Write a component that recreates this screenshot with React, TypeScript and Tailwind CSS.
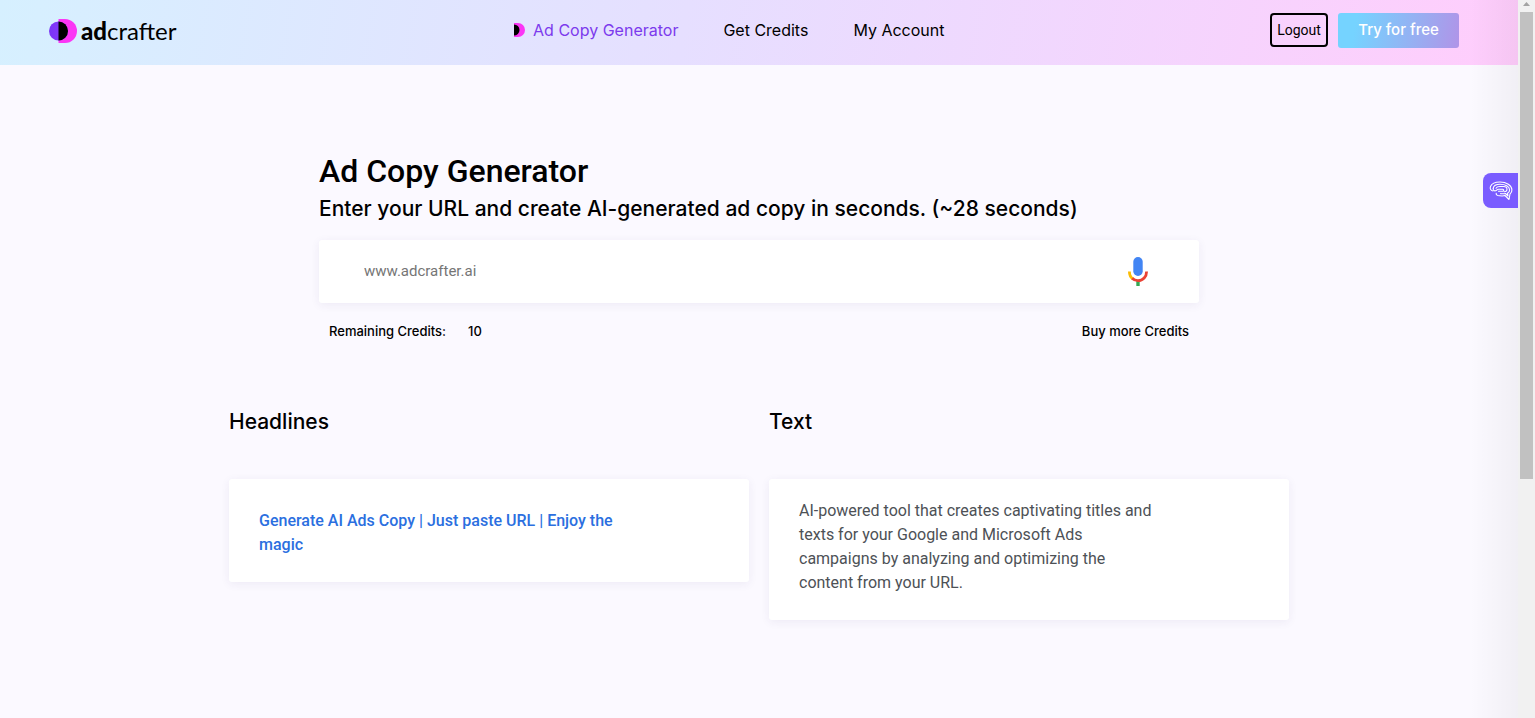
import { useState } from "react";

type NavItem = { label: string; href: string; active?: boolean };

const navItems: NavItem[] = [
  { label: "Ad Copy Generator", href: "#generator", active: true },
  { label: "Get Credits", href: "#credits" },
  { label: "My Account", href: "#account" },
];

const LogoMark = () => (
  <svg width="29" height="24" viewBox="0 0 29 24" aria-hidden="true">
    <defs>
      <linearGradient id="violet" x1="0" x2="1">
        <stop offset="0" stopColor="#7a35f5" />
        <stop offset="1" stopColor="#8b3bff" />
      </linearGradient>
    </defs>
    <path d="M9.5 0H16a12 12 0 0 1 0 24H9.5Z" fill="#fb35f5" />
    <circle cx="9.5" cy="12" r="9.5" fill="url(#violet)" />
    <path d="M9.5 2.500a9.500 9.500 0 0 1 0 19Z" fill="#000" />
  </svg>
);

const HalfMark = () => (
  <svg width="11" height="14" viewBox="0 0 11 14" aria-hidden="true">
    <path d="M0 0H4a7 7 0 0 1 0 14H0Z" fill="#fb35f5" />
    <path d="M0 1.500a5.500 5.500 0 0 1 0 11Z" fill="#000" />
  </svg>
);

const MicIcon = () => (
  <svg width="20" height="30" viewBox="0 0 20 30" aria-hidden="true">
    <rect x="5.300" y="0" width="9.400" height="19" rx="4.700" fill="#4285f4" />
    <path d="M8.300 23.500h3.400V29H8.300Z" fill="#34a853" />
    <path d="M1.400 14.500c0 3.200 1.400 6 3.600 7.500" stroke="#fbbc05" strokeWidth="2.800" fill="none" />
    <path d="M4.200 21.200C5.700 22.800 7.700 23.600 10 23.600c5 0 8.600-4 8.600-9.100" stroke="#ea4335" strokeWidth="2.800" fill="none" />
  </svg>
);

const BrainIcon = () => (
  <svg
    width="24"
    height="20"
    viewBox="0 0 24 20"
    fill="none"
    stroke="#fff"
    strokeWidth="1.100"
    strokeLinecap="round"
    strokeLinejoin="round"
    aria-hidden="true"
  >
    <path d="M4 10C1.500 9.500.700 7.500 1.500 5.500 2.500 3 6.500 1 11 1c6.500 0 11.700 3.500 11.900 7.700.1 1.900-.6 3.300-1.900 4.300L20 18.500l-4-4c-1.500.6-3.500.5-5.200.3-2.300.2-4-1-3.600-2.600" />
    <path d="M4.200 7.300C4.600 4.600 7.500 3.300 11 3.300c5.300 0 9.400 2.300 9.600 5.400.1 1.700-.900 2.900-2.100 3.500l.5 2.800-2.500-2.500c-1.500.3-3.300.4-4.900.1" />
    <path d="M4.200 7.300C4 9 5 10 6.500 9.800c1.500-.2 1.500-1.600 3-1.600h4.200c1.400 0 1.400 2 0 2H9.500" />
    <path d="M7 7.200c.6-1.200 2-1.700 4-1.700h3.500c2 0 3.500 1.200 3.500 2.700 0 1.600-1.300 2.400-2.700 2.500" />
  </svg>
);

const Header = () => (
  <header className="flex h-[65px] shrink-0 items-start justify-between bg-[linear-gradient(100deg,#d6f0ff,#e6dfff_45%,#ffcdfc)] pt-3 pr-[59px] pl-[49px]">
    <a href="#home" className="flex items-center pt-[3px] pr-3">
      <LogoMark />
      <span className="pl-[3px] font-['Lato'] text-[24px] leading-8 text-black">
        <b className="font-black">ad</b>crafter
      </span>
    </a>
    <nav className="flex gap-[45px] font-['Inter'] text-base leading-9 text-black">
      {navItems.map((item) =>
        item.active ? (
          <a key={item.label} href={item.href} className="flex items-center gap-2 text-[#7c3aed]">
            <HalfMark />
            {item.label}
          </a>
        ) : (
          <a key={item.label} href={item.href}>
            {item.label}
          </a>
        )
      )}
    </nav>
    <div className="flex gap-[10px] pt-px">
      <button className="h-[34px] w-[58px] rounded border-2 border-black text-sm text-black">
        Logout
      </button>
      <button className="h-[35px] w-[121px] rounded-[3px] bg-[linear-gradient(100deg,#75d3ff_15%,#b094e8)] font-['Inter'] text-[15px] font-medium text-white">
        Try for free
      </button>
    </div>
  </header>
);

const cardStyle = "rounded-[3px] bg-white shadow-[0_2px_10px_rgba(60,40,120,0.07)]";

const Generator = () => {
  const [url, setUrl] = useState<string>("");

  return (
    <section className="mx-auto w-full max-w-[880px] text-black">
      <h1 className="text-[32px] leading-10 font-medium">Ad Copy Generator</h1>
      <label htmlFor="url" className="block font-['Inter'] text-[21px] leading-9 font-medium">
        Enter your URL and create AI-generated ad copy in seconds. (~28 seconds)
      </label>
      <div className={`mt-[13px] flex h-[63px] items-center pr-[51px] pl-[45px] ${cardStyle}`}>
        <input
          id="url"
          type="text"
          value={url}
          onChange={(e) => setUrl(e.target.value)}
          placeholder="www.adcrafter.ai"
          className="min-w-0 flex-1 text-[15px] outline-none placeholder:text-[#757575]"
        />
        <button aria-label="Voice input">
          <MicIcon />
        </button>
      </div>
      <div className="mt-[18px] flex justify-between px-[10px] font-['Inter'] text-[13px] leading-5 font-medium">
        <p className="flex gap-[22px]">
          <span>Remaining Credits:</span>
          <span>10</span>
        </p>
        <a href="#credits">Buy more Credits</a>
      </div>
    </section>
  );
};

const Results = () => (
  <section className="mx-auto mt-[65px] grid w-full max-w-[1060px] grid-cols-2 items-start gap-5 text-base leading-6">
    <div>
      <h2 className="font-['Inter'] text-[21px] leading-8 font-medium text-black">Headlines</h2>
      <div className={`mt-[41px] px-[30px] pt-[30px] pb-[25px] ${cardStyle}`}>
        <p className="max-w-[360px] font-medium text-[#2b6fe0]">
          Generate AI Ads Copy | Just paste URL | Enjoy the magic
        </p>
      </div>
    </div>
    <div>
      <h2 className="font-['Inter'] text-[21px] leading-8 font-medium text-black">Text</h2>
      <div className={`mt-[41px] px-[30px] pt-5 pb-[25px] ${cardStyle}`}>
        <p className="max-w-[360px] text-[#4d5156]">
          AI-powered tool that creates captivating titles and texts for your Google and Microsoft
          Ads campaigns by analyzing and optimizing the content from your URL.
        </p>
      </div>
    </div>
  </section>
);

const ScrollBar = () => (
  <div className="flex w-[17px] shrink-0 flex-col items-center bg-[#f1f1f1]">
    <svg width="9" height="12" viewBox="0 0 9 12" aria-hidden="true">
      <path d="M1 6 4.500 2 8 6Z" fill="#a3a3a3" />
    </svg>
    <div className="h-[65%] w-[13px] bg-[#c1c1c1]" />
  </div>
);

export const App = () => (
  <div className="flex h-screen overflow-hidden bg-[#fbf9ff] font-['Roboto',sans-serif]">
    <div className="relative flex min-w-0 flex-1 flex-col">
      <Header />
      <main className="flex-1 px-6 pt-[86px]">
        <Generator />
        <Results />
      </main>
      <div className="pointer-events-none absolute inset-y-0 right-0 w-12 bg-linear-to-r from-transparent to-black/4" />
      <button
        aria-label="Open assistant"
        className="absolute top-[173px] right-0 flex h-[35px] w-[35px] items-center justify-center rounded-l-lg bg-[#7a5cff]"
      >
        <BrainIcon />
      </button>
    </div>
    <ScrollBar />
  </div>
);

export default App;
